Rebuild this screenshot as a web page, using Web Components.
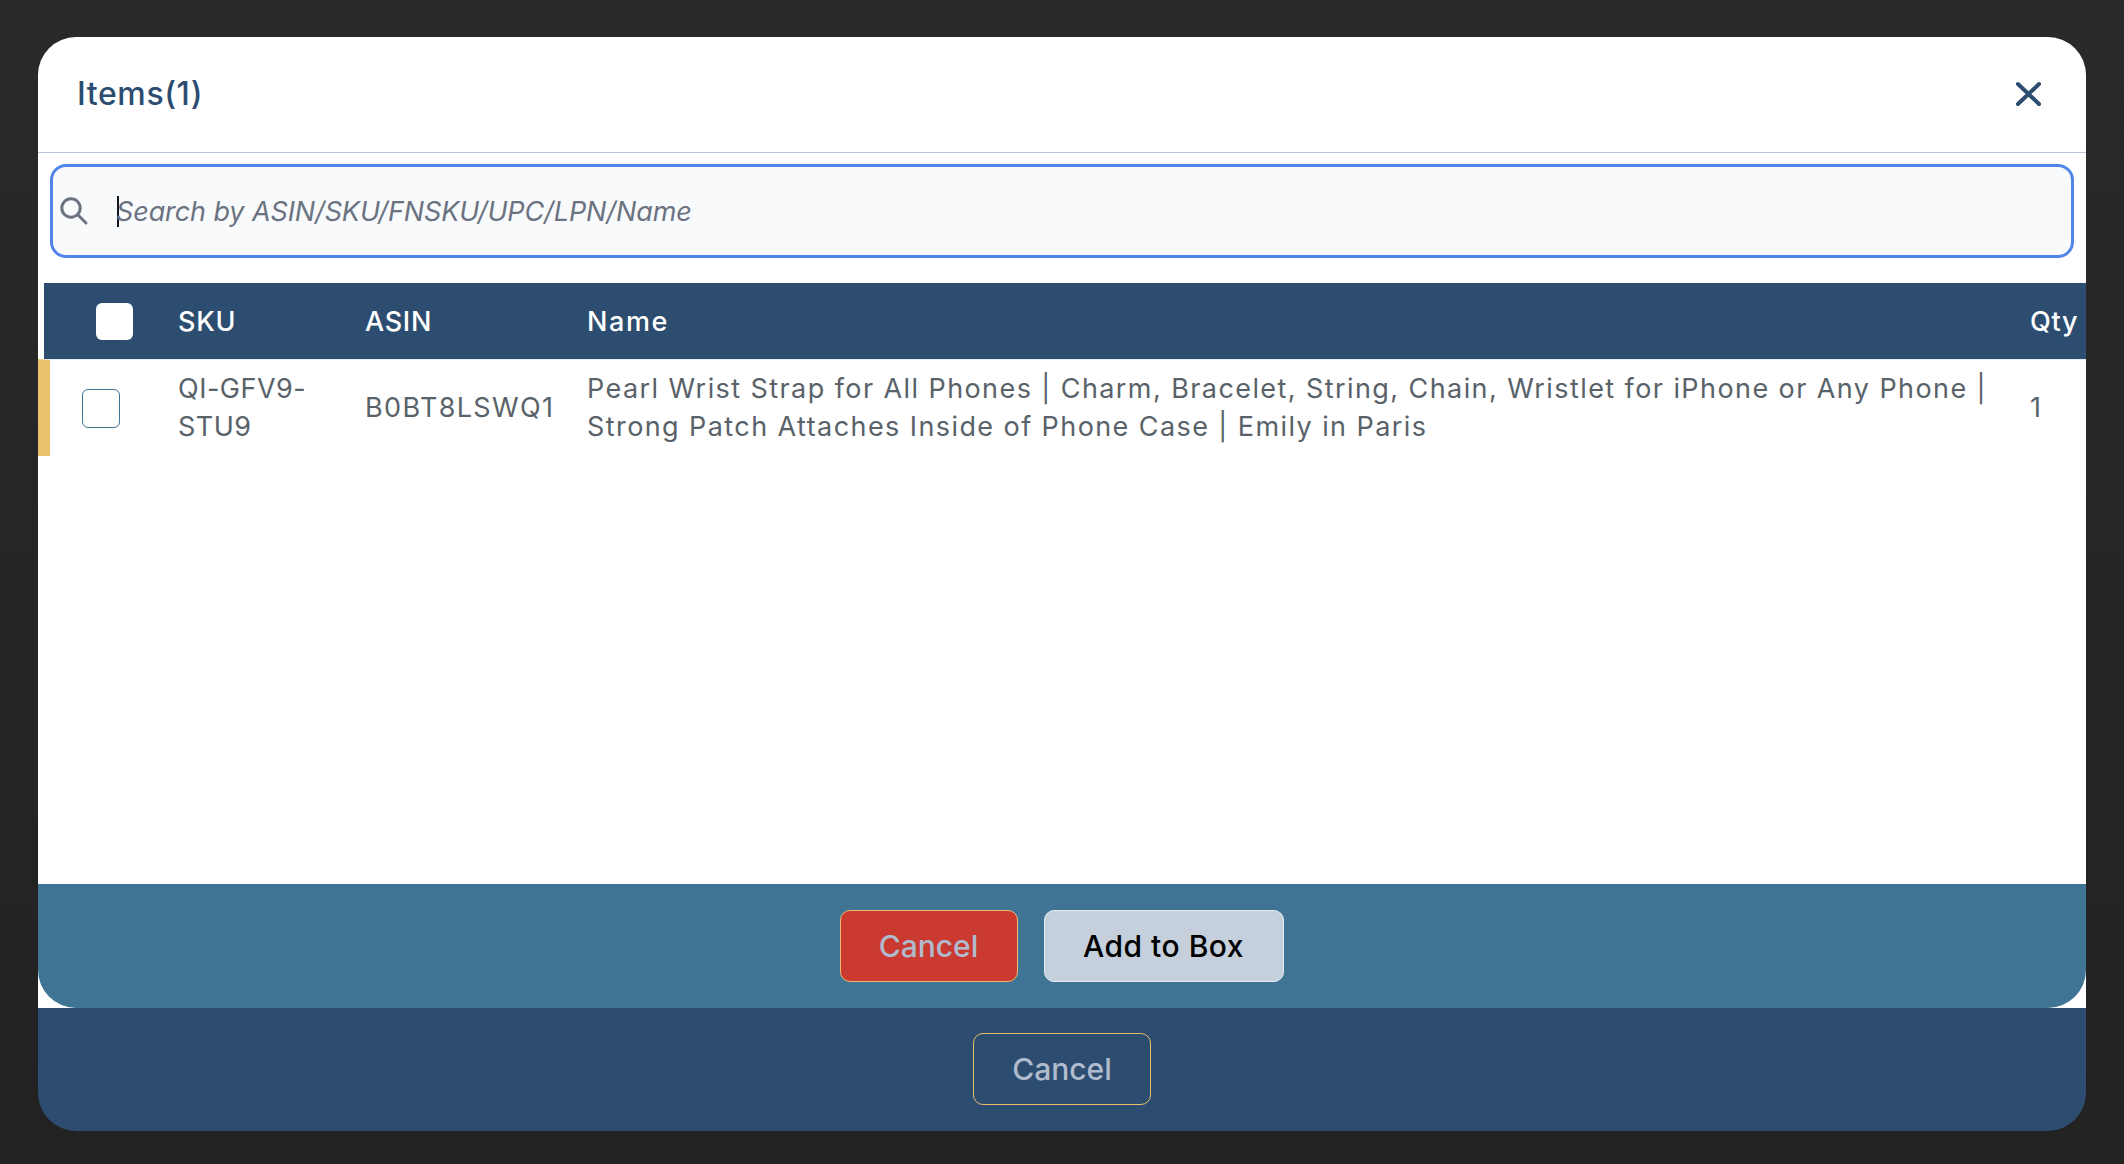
<!DOCTYPE html>
<html>
<head>
<meta charset="utf-8">
<style>
    html, body { margin: 0; padding: 0; height: 100%; }
    body {
        background: linear-gradient(#292929, #222222);
        font-family: Inter, "Liberation Sans", sans-serif;
        overflow: hidden;
    }
</style>
</head>
<body>
<items-modal>
    <modal-header slot="header" title-text="Items(1)"></modal-header>
    <search-box slot="search" placeholder="Search by ASIN/SKU/FNSKU/UPC/LPN/Name"></search-box>
    <items-table slot="table">
        <item-row sku="QI-GFV9-STU9" asin="B0BT8LSWQ1" qty="1" name="Pearl Wrist Strap for All Phones | Charm, Bracelet, String, Chain, Wristlet for iPhone or Any Phone | Strong Patch Attaches Inside of Phone Case | Emily in Paris"></item-row>
    </items-table>
    <app-button slot="actions" kind="danger">Cancel</app-button>
    <app-button slot="actions" kind="light">Add to Box</app-button>
    <app-button slot="outer" kind="outline">Cancel</app-button>
</items-modal>

<script>
class ItemsModal extends HTMLElement {
    constructor() {
        super();
        const shadow = this.attachShadow({ mode: 'open' });
        shadow.innerHTML = `
            <style>
                :host {
                    display: flex;
                    flex-direction: column;
                    box-sizing: border-box;
                    width: 2048px;
                    height: 1094px;
                    margin: 37px 0 0 38px;
                    border-radius: 38px;
                    overflow: hidden;
                    background: #2c4d70;
                }
                .dialog {
                    height: 971px;
                    flex: none;
                    display: flex;
                    flex-direction: column;
                    background: #fff;
                }
                .body { flex: 1; min-height: 0; }
                .actions {
                    height: 124px;
                    flex: none;
                    box-sizing: border-box;
                    display: flex;
                    align-items: center;
                    justify-content: center;
                    gap: 26px;
                    padding-right: 1px;
                    background: #407494;
                    border-radius: 0 0 38px 38px;
                }
                .outer {
                    flex: 1;
                    display: flex;
                    align-items: center;
                    justify-content: center;
                    padding-bottom: 1px;
                }
            </style>
            <div class="dialog">
                <slot name="header"></slot>
                <slot name="search"></slot>
                <div class="body"><slot name="table"></slot></div>
                <div class="actions"><slot name="actions"></slot></div>
            </div>
            <div class="outer"><slot name="outer"></slot></div>
        `;
    }
}

class ModalHeader extends HTMLElement {
    constructor() {
        super();
        const shadow = this.attachShadow({ mode: 'open' });
        shadow.innerHTML = `
            <style>
                :host {
                    display: flex;
                    align-items: center;
                    justify-content: space-between;
                    box-sizing: border-box;
                    height: 116px;
                    padding: 0 44px 2px 39px;
                    border-bottom: 1px solid #b4c2d2;
                    color: #2c4d70;
                }
                h2 { margin: 0; font-size: 32px; font-weight: 500; letter-spacing: 0.6px; }
                svg { display: block; }
            </style>
            <h2>${this.getAttribute('title-text')}</h2>
            <svg width="28" height="26" viewBox="0 0 28 26" fill="none" stroke="#2c4d70" stroke-width="4" stroke-linecap="round">
                <path d="M4 3 L25 23 M25 3 L4 23"/>
            </svg>
        `;
    }
}

class SearchBox extends HTMLElement {
    constructor() {
        super();
        const shadow = this.attachShadow({ mode: 'open' });
        shadow.innerHTML = `
            <style>
                :host {
                    display: flex;
                    align-items: center;
                    box-sizing: border-box;
                    height: 94px;
                    margin: 11px 12px 0 12px;
                    padding-left: 6px;
                    border: 3px solid #5285ea;
                    border-radius: 16px;
                    background: #f8fafc;
                    color: #6b7280;
                }
                svg { display: block; flex: none; }
                .caret { width: 2px; height: 31px; background: #111827; flex: none; margin: 0 -3px 0 28px; }
                .text { font-size: 27px; font-style: italic; letter-spacing: -0.1px; white-space: nowrap; }
            </style>
            <svg width="30" height="30" viewBox="0 0 30 30" fill="none" stroke="#6b7280" stroke-width="3" stroke-linecap="round">
                <circle cx="12" cy="12" r="9.2"/>
                <path d="M19 19 L27 27"/>
            </svg>
            <span class="caret"></span>
            <span class="text">${this.getAttribute('placeholder')}</span>
        `;
    }
}

class ItemsTable extends HTMLElement {
    constructor() {
        super();
        const shadow = this.attachShadow({ mode: 'open' });
        shadow.innerHTML = `
            <style>
                :host { display: block; margin-top: 25px; }
                .head {
                    display: grid;
                    grid-template-columns: 134px 187px 222px 1443px 1fr;
                    align-items: center;
                    height: 76px;
                    margin-left: 6px;
                    background: #2c4d70;
                    color: #fff;
                    font-size: 27px;
                    font-weight: 500;
                    letter-spacing: 0.7px;
                }
                .box {
                    width: 37px;
                    height: 37px;
                    margin-left: 52px;
                    background: #fff;
                    border-radius: 6px;
                }
                .name { letter-spacing: 1.6px; }
            </style>
            <div class="head">
                <span class="box"></span>
                <span>SKU</span>
                <span>ASIN</span>
                <span class="name">Name</span>
                <span>Qty</span>
            </div>
            <slot></slot>
        `;
    }
}

class ItemRow extends HTMLElement {
    constructor() {
        super();
        const shadow = this.attachShadow({ mode: 'open' });
        shadow.innerHTML = `
            <style>
                :host {
                    display: grid;
                    grid-template-columns: 128px 187px 222px 1443px 1fr;
                    align-items: center;
                    box-sizing: border-box;
                    height: 97px;
                    border-left: 12px solid #ebc36f;
                    border-top: 1px solid #e5eaf0;
                    color: #596269;
                    font-size: 27px;
                    line-height: 38px;
                    letter-spacing: 1.35px;
                }
                .box {
                    box-sizing: border-box;
                    width: 38px;
                    height: 39px;
                    margin-left: 32px;
                    border: 1.5px solid #407494;
                    border-radius: 6px;
                    background: #fff;
                }
                .sku { width: 150px; letter-spacing: 0.5px; }
                .name { width: 1420px; letter-spacing: 1.42px; }
            </style>
            <span class="box"></span>
            <span class="sku">${this.getAttribute('sku')}</span>
            <span>${this.getAttribute('asin')}</span>
            <span class="name">${this.getAttribute('name')}</span>
            <span>${this.getAttribute('qty')}</span>
        `;
    }
}

class AppButton extends HTMLElement {
    constructor() {
        super();
        const shadow = this.attachShadow({ mode: 'open' });
        shadow.innerHTML = `
            <style>
                :host {
                    display: inline-flex;
                    align-items: center;
                    justify-content: center;
                    box-sizing: border-box;
                    width: 178px;
                    height: 72px;
                    border-radius: 10px;
                    font-size: 30px;
                    font-weight: 500;
                    border: 1.5px solid #e9bd6b;
                    color: #b0bccd;
                }
                :host([kind="danger"]) { background: #cb3a30; }
                :host([kind="light"]) {
                    background: #c5d0dc;
                    border-color: #e6ebf0;
                    color: #000;
                    width: 240px;
                    letter-spacing: 0.5px;
                }
            </style>
            <slot></slot>
        `;
    }
}

customElements.define('items-modal', ItemsModal);
customElements.define('modal-header', ModalHeader);
customElements.define('search-box', SearchBox);
customElements.define('items-table', ItemsTable);
customElements.define('item-row', ItemRow);
customElements.define('app-button', AppButton);
</script>
</body>
</html>
